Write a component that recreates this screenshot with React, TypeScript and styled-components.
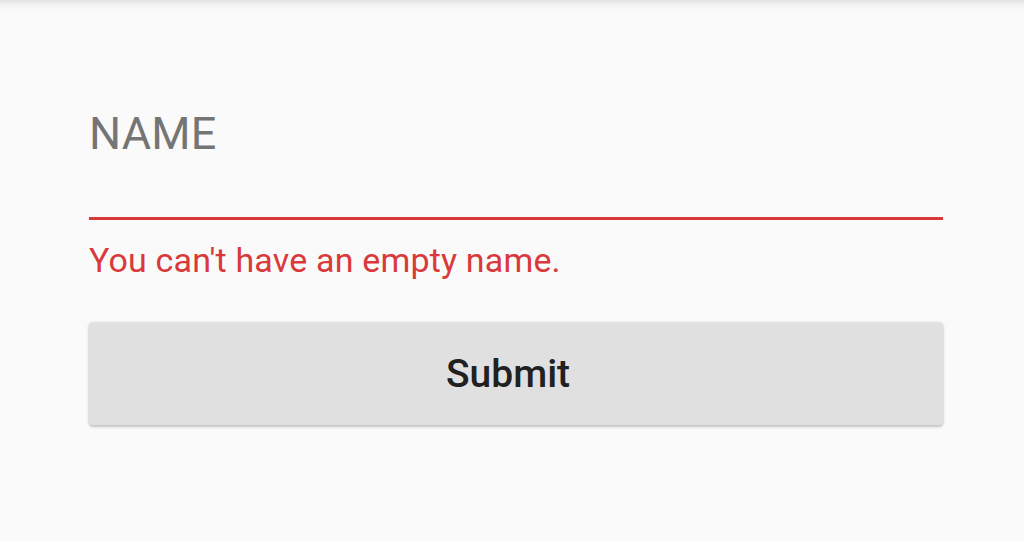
import styled, { createGlobalStyle } from 'styled-components';

const GlobalStyle = createGlobalStyle`
  html, body {
    margin: 0;
    padding: 0;
    background: #fafafa;
    font-family: Roboto, "Liberation Sans", sans-serif;
  }
`;

const Screen = styled.div`
  width: 1024px;
  height: 541px;
  background: #fafafa;
  overflow: hidden;
`;

const AppBarShadow = styled.div`
  height: 10px;
  background: linear-gradient(to bottom, #e2e2e2 0%, #f1f1f1 45%, #fafafa 100%);
`;

const Form = styled.form`
  display: flex;
  flex-direction: column;
  padding: 101px 81px 0 89px;
`;

const Field = styled.div`
  display: flex;
  flex-direction: column;
`;

const Label = styled.label`
  font-size: 45px;
  line-height: 45px;
  color: #757575;
  letter-spacing: 0.2px;
`;

const InputLine = styled.div<{ $error?: boolean }>`
  height: 61px;
  border-bottom: 3px solid ${(p) => (p.$error ? '#d9393b' : '#9e9e9e')};
`;

const ErrorText = styled.div`
  margin-top: 23px;
  font-size: 34px;
  line-height: 34px;
  letter-spacing: 0.17px;
  color: #d9393b;
`;

const SubmitButton = styled.button`
  margin-top: 45px;
  height: 103px;
  display: flex;
  align-items: center;
  justify-content: center;
  border: none;
  border-radius: 4px;
  background: #e0e0e0;
  box-shadow: 0 2px 3px rgba(0, 0, 0, 0.22), 0 0 2px rgba(0, 0, 0, 0.08);
  font-family: Roboto, "Liberation Sans", sans-serif;
  font-weight: 500;
  font-size: 39px;
  line-height: 40px;
  color: #212121;
  padding: 0 16px 0 0;
`;

export default function App() {
  return (
    <Screen>
      <GlobalStyle />
      <AppBarShadow />
      <Form onSubmit={(e) => e.preventDefault()}>
        <Field>
          <Label>NAME</Label>
          <InputLine $error />
          <ErrorText>You can't have an empty name.</ErrorText>
        </Field>
        <SubmitButton type="submit">Submit</SubmitButton>
      </Form>
    </Screen>
  );
}
